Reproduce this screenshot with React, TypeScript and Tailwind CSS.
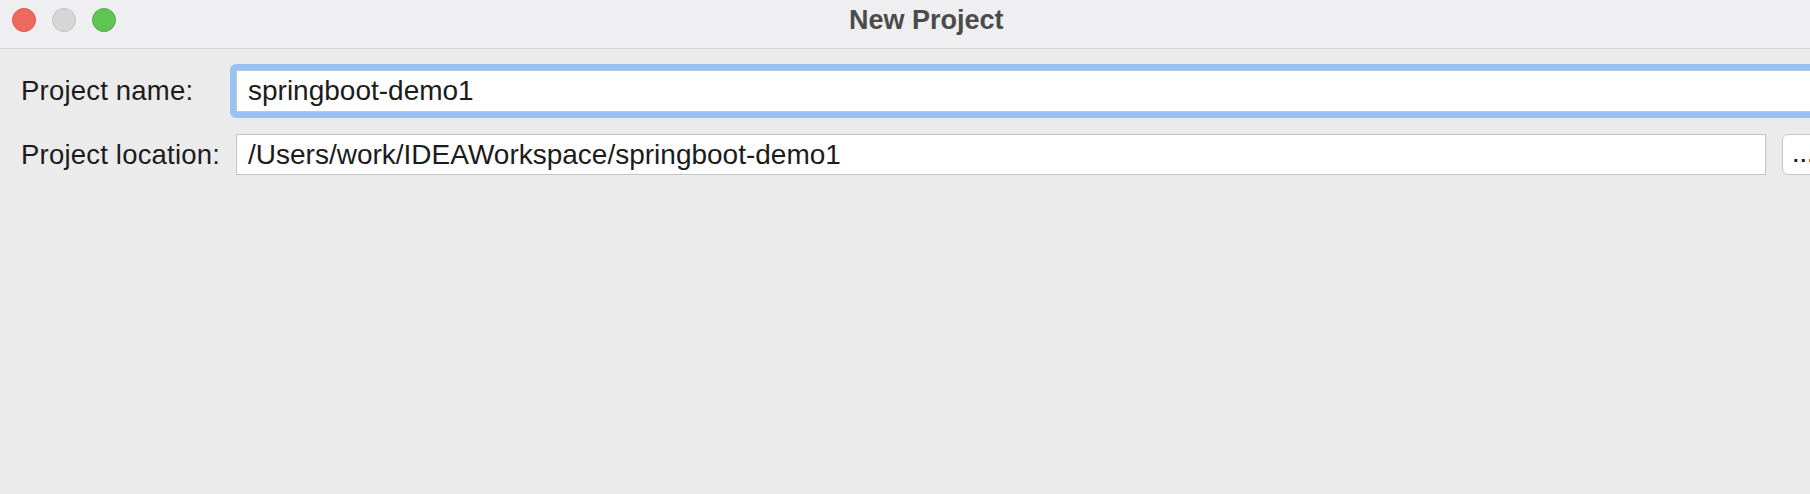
export default function App() {
  return (
    <div
      className="w-[1810px] h-[494px] overflow-hidden bg-[#ebebeb] text-[#1c1c1c]"
      style={{ fontFamily: '"Liberation Sans", Arial, sans-serif' }}
    >
      {/* title bar */}
      <div className="h-[49px] flex items-start bg-[#efeff1] border-b border-[#d3d3d3]">
        <div className="flex gap-[16px] mt-[8px] ml-[12px]">
          <div className="w-[24px] h-[24px] rounded-full bg-[#ee6a5f] border border-[#d8574c]" />
          <div className="w-[24px] h-[24px] rounded-full bg-[#d6d6d6] border border-[#c2c2c2]" />
          <div className="w-[24px] h-[24px] rounded-full bg-[#61c554] border border-[#50a845]" />
        </div>
        <div className="ml-[733px] mt-[0px] text-[27px] font-bold text-[#4b4b4b]">
          New Project
        </div>
      </div>

      {/* form */}
      <div className="pl-[21px] pt-[15px] flex flex-col gap-[16px]">
        <div className="flex items-center">
          <div className="w-[215px] shrink-0 text-[27.5px] tracking-[0.2px]">Project name:</div>
          <div className="-ml-[6px] w-[1600px] shrink-0 p-[6px] rounded-[6px] bg-[#98c2f3]">
            <div className="h-[42px] bg-white border border-[#bfc5cc] flex items-center pl-[11px] text-[28px]">
              springboot-demo1
            </div>
          </div>
        </div>
        <div className="flex items-center">
          <div className="w-[215px] shrink-0 text-[27.5px] tracking-[0.2px]">Project location:</div>
          <div className="w-[1530px] shrink-0 h-[41px] bg-white border border-[#c4c4c4] flex items-center pl-[11px] text-[28px]">
            /Users/work/IDEAWorkspace/springboot-demo1
          </div>
          <div className="ml-[16px] w-[60px] shrink-0 h-[41px] bg-white border border-[#c6c6c6] rounded-[6px] flex items-center pl-[10px] text-[20px] font-bold tracking-[2px]">
            ...
          </div>
        </div>
      </div>
    </div>
  );
}
